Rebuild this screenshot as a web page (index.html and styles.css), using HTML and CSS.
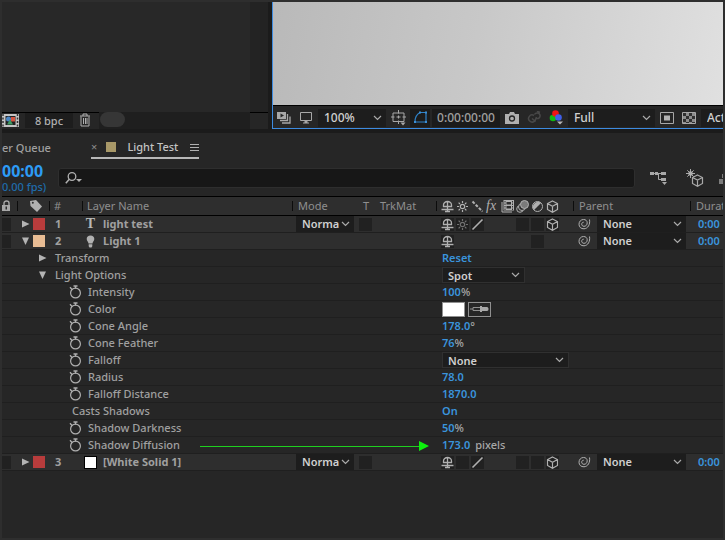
FILE: index.html
```html
<!DOCTYPE html>
<html lang="en">

<head>
  <meta charset="UTF-8">
  <meta name="viewport" content="width=device-width, initial-scale=1.0">
  <title>Light Test</title>
  <link rel="stylesheet" href="styles.css">
</head>

<body>
  <!-- shared icons -->
  <svg class="sprite" aria-hidden="true">
    <symbol id="shy" viewBox="0 0 13 13">
      <path d="M2.500 6.500V5a4 3.500 0 0 1 8 0v1.500zM6.500 1v10M.500 9.500h12M4 11.500h5" fill="none" stroke="currentColor" stroke-width="1.300" />
    </symbol>
    <symbol id="sun" viewBox="0 0 13 13">
      <circle cx="6.500" cy="6.500" r="2.200" fill="none" stroke="currentColor" stroke-width="1.200" />
      <path d="M6.500 1v2M6.500 10v2M1 6.500h2M10 6.500h2M2.600 2.600l1.400 1.400M9 9l1.400 1.400M10.400 2.600L9 4M4 9l-1.400 1.400" stroke="currentColor" stroke-width="1.200" />
    </symbol>
    <symbol id="slash" viewBox="0 0 13 13">
      <path d="M1.500 11.500l10-10" stroke="currentColor" stroke-width="1.600" />
    </symbol>
    <symbol id="cube" viewBox="0 0 13 13">
      <path d="M6.500 1l5 2.500v6l-5 2.700-5-2.700v-6zM1.500 3.500l5 2.700 5-2.700M6.500 6.200v6" fill="none" stroke="currentColor" stroke-width="1.200" />
    </symbol>
    <symbol id="watch" viewBox="0 0 13 14">
      <circle cx="6.500" cy="8" r="4.900" fill="none" stroke="currentColor" stroke-width="1.200" />
      <path d="M4.500 1h4M6.500 1v2.500M1 2.200l2 2.300" fill="none" stroke="currentColor" stroke-width="1.300" />
    </symbol>
    <symbol id="right" viewBox="0 0 9 8">
      <path d="M1 .5v7L8.500 4z" fill="currentColor" />
    </symbol>
    <symbol id="down" viewBox="0 0 9 8">
      <path d="M1 .5h7L4.500 8z" fill="currentColor" />
    </symbol>
    <symbol id="whip" viewBox="0 0 13 13">
      <path d="M11.500 1.500c.8 5-1.500 9-5.500 9.300-3 .1-5-1.800-5-4.500C1 3.500 3 1.500 5.500 1.500c2.300 0 3.700 1.400 3.700 3.300C9.200 7 7.800 8.300 6 8.300c-1.400 0-2.300-.9-2.300-2.100 0-1.200.8-2 2-2" fill="none" stroke="currentColor" />
    </symbol>
  </svg>

  <div class="app">
    <div class="top">
      <!-- project panel -->
      <div class="project">
        <div class="project-body"></div>
        <div class="project-scroll"></div>
        <div class="project-footer">
          <svg class="film" viewBox="0 0 18 13">
            <path d="M0 0h17v13H0z" fill="#c4c4c4" />
            <path d="M1 0v13M15.500 0v13" stroke="#333" stroke-width="1.500" stroke-dasharray="2 1.500" />
            <path d="M3.500 2h10v9h-10z" fill="#222" />
            <circle cx="6.500" cy="5" r="2.500" fill="#4a86c4" />
            <path d="M9 3h4v4.500H9z" fill="#d4543f" />
            <path d="M5 10.500l3-5 3 5z" fill="#3f9a62" />
          </svg>
          <button class="depth">8 bpc</button>
          <svg class="trash" viewBox="0 0 12 14">
            <path d="M1 3h10M4 3V1h4v2M2 3.500V13h8V3.500M4.500 5v6M6.500 5v6M8 5v6" fill="none" stroke="currentColor" />
          </svg>
        </div>
        <div class="project-track"><span class="knob"></span></div>
        <div class="project-corner"></div>
      </div>

      <!-- composition viewer -->
      <div class="viewer">
        <div class="canvas"></div>
        <div class="toolbar">
          <button class="tool" aria-label="Always preview">
            <svg width="14" height="12" viewBox="0 0 14 12">
              <path d="M0 0h9v7H0z" fill="#a8a8a8" />
              <path d="M3.500 1.500v4L7 3.500z" fill="#262626" />
              <path d="M10.500 2v6.500H3M13 4.500v6.500H5" fill="none" stroke="#a8a8a8" stroke-width="1.300" />
            </svg>
          </button>
          <button class="tool" aria-label="Primary viewer">
            <svg width="14" height="12" viewBox="0 0 14 12">
              <path d="M1.500.5h11v8h-11zM4 11h6" fill="none" stroke="#a8a8a8" />
              <path d="M5.500 9h3v2h-3z" fill="#a8a8a8" />
            </svg>
          </button>
          <select class="select zoom" aria-label="Magnification"><option>100%</option></select>
          <button class="tool" aria-label="Grid and guides">
            <svg width="15" height="16" viewBox="0 0 15 16">
              <path d="M2 3h11v8.500H2zM7.500 0v3.500M7.500 5.500v3M7.500 10.500V14M0 7h3.500M5.500 7h4M11.500 7H15" fill="none" stroke="#a8a8a8" />
              <path d="M9.500 12.500h5L12 15.500z" fill="#a8a8a8" />
            </svg>
          </button>
          <button class="tool tool-on" aria-label="Toggle mask visibility">
            <svg width="15" height="13" viewBox="0 0 15 13">
              <path d="M2 11C2 6 4 3 7 1.500h6V11z" fill="none" stroke="#2f82c8" stroke-width="1.200" />
              <path d="M1 10h2v2H1zM6 .5h2v2H6zM12 .5h2v2h-2zM12 10h2v2h-2z" fill="#3b8fd6" />
            </svg>
          </button>
          <button class="timecode">0:00:00:00</button>
          <button class="tool" aria-label="Take snapshot">
            <svg width="14" height="12" viewBox="0 0 14 12">
              <path d="M0 2h4l1-2h4l1 2h4v10H0z" fill="#b0b0b0" />
              <circle cx="7" cy="6.500" r="2.500" fill="#b0b0b0" stroke="#262626" stroke-width="1.300" />
            </svg>
          </button>
          <button class="tool" aria-label="Show snapshot">
            <svg width="15" height="13" viewBox="0 0 15 13">
              <path d="M7 4.500a3.500 3.500 0 1 0 1 5M5 7.500l3 2.500 1.500-4M7.500 3.500c1-2 5-2 5.500.5.500 2.500-1.500 4-3.500 3.500M10 0l3 1.500" fill="none" stroke="#484848" stroke-width="1.500" />
            </svg>
          </button>
          <button class="tool" aria-label="Channels">
            <svg width="15" height="15" viewBox="0 0 15 15">
              <circle cx="4" cy="8" r="3.300" fill="#12b812" />
              <circle cx="6.500" cy="3.500" r="3.300" fill="#f01414" />
              <circle cx="9.500" cy="7.500" r="3.300" fill="#3f5fe8" />
              <path d="M8 11.500h6l-3 3z" fill="#b8b8b8" />
            </svg>
          </button>
          <select class="select resolution" aria-label="Resolution"><option>Full</option></select>
          <button class="tool" aria-label="Region of interest">
            <svg width="14" height="12" viewBox="0 0 14 12">
              <path d="M.5.5h13v11H.5z" fill="none" stroke="#a8a8a8" />
              <path d="M4 3.500h6v5H4z" fill="#b4b4b4" />
            </svg>
          </button>
          <button class="tool" aria-label="Transparency grid">
            <svg width="14" height="12" viewBox="0 0 14 12">
              <path d="M.5.5h13v11H.5z" fill="#303030" stroke="#a8a8a8" />
              <path d="M4 1h3v3H4zM10 1h3v3h-3zM1 4h3v3H1zM7 4h3v3H7zM4 7h3v3H4zM10 7h3v3h-3zM1 10h3v1H1zM7 10h3v1H7z" fill="#8c8c8c" />
            </svg>
          </button>
          <select class="select camera" aria-label="3D view"><option>Active Camera</option></select>
        </div>
      </div>
    </div>

    <!-- timeline -->
    <div class="timeline">
      <div class="tabs">
        <button class="tab">er Queue</button>
        <div class="tab tab-active">
          <button class="tab-close" aria-label="Close">×</button>
          <span class="tab-color"></span>
          <button class="tab-name">Light Test</button>
          <button class="tab-menu" aria-label="Panel menu"></button>
        </div>
      </div>

      <div class="controls">
        <div class="time">
          <span class="now">00:00</span>
          <span class="fps">0.00 fps)</span>
        </div>
        <label class="search">
          <svg width="18" height="12" viewBox="0 0 18 12">
            <circle cx="7" cy="4.500" r="3.800" fill="none" stroke="#b0b0b0" stroke-width="1.300" />
            <path d="M4.300 7.300L.8 11.300" stroke="#b0b0b0" stroke-width="1.500" />
            <path d="M11 7h6l-3 3z" fill="#b0b0b0" />
          </svg>
          <input type="text" aria-label="Search layers">
        </label>
        <button class="ctl" aria-label="Mini flowchart">
          <svg width="18" height="14" viewBox="0 0 18 14">
            <path d="M0 1h4v3H0zM5 1h3v3H5zM11 1h5v3h-5zM11 7h5v3h-5z" fill="#a8a8a8" />
            <path d="M0 2.500h12M8.500 2.500v6H12" fill="none" stroke="#a8a8a8" />
            <path d="M12 11h5l-2.500 3z" fill="#a8a8a8" />
          </svg>
        </button>
        <button class="ctl" aria-label="Draft 3D">
          <svg width="18" height="18" viewBox="0 0 18 18">
            <path d="M11.500 6l5 2.500v6l-5 2.700-5-2.700v-6zM6.500 8.500l5 2.500 5-2.500M11.500 11v6" fill="none" stroke="#a8a8a8" stroke-width="1.200" />
            <path d="M4.500 0v9M0 4.500h9M1.300 1.300l6.400 6.400M7.700 1.300L1.300 7.700" stroke="#a8a8a8" />
            <circle cx="4.500" cy="4.500" r="2.300" fill="#b0b0b0" />
          </svg>
        </button>
        <button class="ctl ctl-last" aria-label="Hide shy layers">
          <svg width="10" height="13" viewBox="0 0 10 13">
            <path d="M0 7h9v5H0zM3 2h4v4H3z" fill="#7c7c7c" />
          </svg>
        </button>
      </div>

      <table class="layers">
        <colgroup>
          <col class="col-lock">
          <col class="col-label">
          <col class="col-num">
          <col class="col-name">
          <col class="col-mode">
          <col class="col-switches">
          <col class="col-parent">
          <col class="col-duration">
        </colgroup>
        <thead>
          <tr>
            <th>
              <svg width="9" height="12" viewBox="0 0 9 12">
                <path d="M2 5V3a2.500 2 0 0 1 5 0v2" fill="none" stroke="#a8a8a8" stroke-width="1.400" />
                <path d="M0 5h8v6H0z" fill="#a8a8a8" />
                <path d="M3.500 6.500h1.500v3H3.500z" fill="#2e2e2e" />
              </svg>
            </th>
            <th class="tag">
              <svg width="12" height="12" viewBox="0 0 12 12">
                <path d="M0 1l6-1 6 6.500L7 12 .5 6z" fill="#b0b0b0" />
                <circle cx="2.800" cy="2.800" r="1" fill="#2e2e2e" />
              </svg>
            </th>
            <th>#</th>
            <th>Layer Name</th>
            <th>
              <div class="modes"><span class="mode-head">Mode</span><span class="t-head">T</span><span>TrkMat</span></div>
            </th>
            <th>
              <div class="switches">
                <svg class="icon"><use href="#shy" /></svg>
                <svg class="icon"><use href="#sun" /></svg>
                <svg class="icon" viewBox="0 0 13 13"><path d="M1.500 1.500l10 10" stroke="currentColor" stroke-width="2" stroke-dasharray="3 1.500" /></svg>
                <i class="fx">fx</i>
                <svg class="icon" viewBox="0 0 13 13">
                  <path d="M1 2v10h10" fill="none" stroke="currentColor" />
                  <path d="M2.500 0H13v10.500H2.500z" fill="currentColor" />
                  <path d="M4 1v9M11.500 1v9" stroke="#2e2e2e" stroke-dasharray="1.500 1" />
                  <path d="M5.500 2h4.500v2.500H5.500zM5.500 6h4.500v2.500H5.500z" fill="#2e2e2e" />
                </svg>
                <svg class="icon" viewBox="0 0 13 13">
                  <circle cx="4" cy="9" r="3.300" fill="none" stroke="currentColor" />
                  <circle cx="6" cy="7" r="3.500" fill="#2e2e2e" stroke="currentColor" />
                  <circle cx="8.500" cy="4.500" r="4" fill="#7a7a7a" stroke="currentColor" />
                </svg>
                <svg class="icon" viewBox="0 0 13 13">
                  <circle cx="6.500" cy="6.500" r="5" fill="none" stroke="currentColor" />
                  <path d="M10 3a5 5 0 0 0-7 7z" fill="currentColor" />
                </svg>
                <svg class="icon"><use href="#cube" /></svg>
              </div>
            </th>
            <th class="wide">Parent</th>
            <th class="wide">Duration</th>
          </tr>
        </thead>
        <tbody>
          <tr class="layer">
            <td><span class="box"></span></td>
            <td><div class="label"><svg class="twirl"><use href="#right" /></svg><span class="swatch red"></span></div></td>
            <td class="num">1</td>
            <td>
              <div class="name"><b class="type">T</b>light test</div>
            </td>
            <td>
              <div class="modes"><select class="select mode" aria-label="Mode"><option>Norma</option></select><span class="box"></span></div>
            </td>
            <td>
              <div class="switches">
                <span class="box"><svg class="icon"><use href="#shy" /></svg></span>
                <span class="box"><svg class="icon dim"><use href="#sun" /></svg></span>
                <span class="box"><svg class="icon"><use href="#slash" /></svg></span>
                <span class="blank"></span>
                <span class="blank"></span>
                <span class="box"></span>
                <span class="box"></span>
                <span class="box"><svg class="icon"><use href="#cube" /></svg></span>
              </div>
            </td>
            <td>
              <div class="parent"><svg class="icon"><use href="#whip" /></svg><select class="select parent-select" aria-label="Parent"><option>None</option></select></div>
            </td>
            <td class="value duration">0:00</td>
          </tr>
          <tr class="layer">
            <td><span class="box"></span></td>
            <td><div class="label"><svg class="twirl"><use href="#down" /></svg><span class="swatch peach"></span></div></td>
            <td class="num">2</td>
            <td>
              <div class="name">
                <svg class="icon" viewBox="0 0 13 13">
                  <path d="M6.500.5c2.300 0 3.800 1.500 3.800 3.500 0 1.800-1.600 2.700-1.800 4.500h-4C4.300 6.700 2.700 5.800 2.700 4 2.700 2 4.200.5 6.500.5zM4.700 9.300h3.600v1.900L7.500 12.500h-2l-.8-1.300z" fill="currentColor" />
                </svg>Light 1
              </div>
            </td>
            <td></td>
            <td>
              <div class="switches">
                <span class="box"><svg class="icon"><use href="#shy" /></svg></span>
                <span class="blank"></span>
                <span class="blank"></span>
                <span class="blank"></span>
                <span class="blank"></span>
                <span class="blank"></span>
                <span class="box"></span>
              </div>
            </td>
            <td>
              <div class="parent"><svg class="icon"><use href="#whip" /></svg><select class="select parent-select" aria-label="Parent"><option>None</option></select></div>
            </td>
            <td class="value duration">0:00</td>
          </tr>
          <tr>
            <td colspan="5"><div class="group"><svg class="twirl"><use href="#right" /></svg>Transform</div></td>
            <td colspan="3" class="value">Reset</td>
          </tr>
          <tr>
            <td colspan="5"><div class="group"><svg class="twirl"><use href="#down" /></svg>Light Options</div></td>
            <td colspan="3" class="value"><select class="select framed light-type" aria-label="Light type"><option>Spot</option></select></td>
          </tr>
          <tr>
            <td colspan="5"><div class="prop"><svg class="watch"><use href="#watch" /></svg>Intensity</div></td>
            <td colspan="3" class="value">100<span class="unit">%</span></td>
          </tr>
          <tr>
            <td colspan="5"><div class="prop"><svg class="watch"><use href="#watch" /></svg>Color</div></td>
            <td colspan="3" class="value">
              <div class="colors">
                <button class="color" aria-label="Light color"></button>
                <button class="picker" aria-label="Eyedropper">
                  <svg width="20" height="8" viewBox="0 0 20 8">
                    <path d="M1 4h3M4 2.500h8M4 5.500h8M4 2.500v3" fill="none" stroke="#8f8f8f" />
                    <path d="M11 1h2v1h5c2 0 2 4 0 4h-5v1h-2z" fill="#a8a8a8" />
                  </svg>
                </button>
              </div>
            </td>
          </tr>
          <tr>
            <td colspan="5"><div class="prop"><svg class="watch"><use href="#watch" /></svg>Cone Angle</div></td>
            <td colspan="3" class="value">178.0<span class="unit">°</span></td>
          </tr>
          <tr>
            <td colspan="5"><div class="prop"><svg class="watch"><use href="#watch" /></svg>Cone Feather</div></td>
            <td colspan="3" class="value">76<span class="unit">%</span></td>
          </tr>
          <tr>
            <td colspan="5"><div class="prop"><svg class="watch"><use href="#watch" /></svg>Falloff</div></td>
            <td colspan="3" class="value"><select class="select framed falloff" aria-label="Falloff"><option>None</option></select></td>
          </tr>
          <tr>
            <td colspan="5"><div class="prop"><svg class="watch"><use href="#watch" /></svg>Radius</div></td>
            <td colspan="3" class="value">78.0</td>
          </tr>
          <tr>
            <td colspan="5"><div class="prop"><svg class="watch"><use href="#watch" /></svg>Falloff Distance</div></td>
            <td colspan="3" class="value">1870.0</td>
          </tr>
          <tr>
            <td colspan="5"><div class="prop">Casts Shadows</div></td>
            <td colspan="3" class="value">On</td>
          </tr>
          <tr>
            <td colspan="5"><div class="prop"><svg class="watch"><use href="#watch" /></svg>Shadow Darkness</div></td>
            <td colspan="3" class="value">50<span class="unit">%</span></td>
          </tr>
          <tr>
            <td colspan="5"><div class="prop"><svg class="watch"><use href="#watch" /></svg><span class="pointed">Shadow Diffusion</span><span class="arrow"></span></div></td>
            <td colspan="3" class="value">173.0<span class="unit word">pixels</span></td>
          </tr>
          <tr class="layer">
            <td><span class="box"></span></td>
            <td><div class="label"><svg class="twirl"><use href="#right" /></svg><span class="swatch red"></span></div></td>
            <td class="num">3</td>
            <td>
              <div class="name"><span class="solid"></span>[White Solid 1]</div>
            </td>
            <td>
              <div class="modes"><select class="select mode" aria-label="Mode"><option>Norma</option></select><span class="box"></span></div>
            </td>
            <td>
              <div class="switches">
                <span class="box"><svg class="icon"><use href="#shy" /></svg></span>
                <span class="box"></span>
                <span class="box"><svg class="icon"><use href="#slash" /></svg></span>
                <span class="blank"></span>
                <span class="blank"></span>
                <span class="box"></span>
                <span class="box"></span>
                <span class="box"><svg class="icon"><use href="#cube" /></svg></span>
              </div>
            </td>
            <td>
              <div class="parent"><svg class="icon"><use href="#whip" /></svg><select class="select parent-select" aria-label="Parent"><option>None</option></select></div>
            </td>
            <td class="value duration">0:00</td>
          </tr>
        </tbody>
      </table>
    </div>
  </div>
</body>

</html>
```
FILE: styles.css
```css
* {
  box-sizing: border-box;
}

body {
  margin: 0;
  background: #262626;
  color: #a0a0a0;
  font: 500 11px/16px "Noto Sans", "Open Sans", sans-serif;
}

button,
select,
input {
  margin: 0;
  padding: 0;
  border: 0;
  border-radius: 0;
  background: none;
  color: inherit;
  font: inherit;
}

svg {
  display: block;
  flex: none;
}

.sprite {
  display: none;
}

.app {
  display: flex;
  flex-direction: column;
  min-height: 100vh;
  border: 2px solid #2e2e2e;
  overflow: hidden;
}

/* shared drop-down */
.select {
  appearance: none;
  height: 16px;
  padding: 0 14px 0 6px;
  color: #d0d0d0;
  background: #1d1d1d url("data:image/svg+xml,%3Csvg xmlns='http://www.w3.org/2000/svg' width='9' height='6'%3E%3Cpath d='M1 1l3.500 3.500L8 1' fill='none' stroke='%23aaa' stroke-width='1.200'/%3E%3C/svg%3E") no-repeat right 4px center;
}

.top {
  display: flex;
  gap: 4px;
  padding-bottom: 4px;
  background: #1b1b1b;
}

/* project panel */
.project {
  width: 266px;
  display: grid;
  grid-template-columns: 97px 1fr 18px;
  grid-template-rows: 1fr 17px;
}

.project-body {
  grid-column: 1 / 3;
  background: #282828;
}

.project-scroll {
  background: #232323;
}

.project-footer,
.project-corner {
  border-top: 1px solid #000;
  background: #262626;
}

.project-footer {
  display: flex;
  align-items: center;
  padding-bottom: 2px;
}

.film {
  width: 18px;
  height: 13px;
}

.depth {
  width: 48px;
  height: 15px;
  margin: 0 6px 0 5px;
  background: #1d1d1d;
  color: #b0b0b0;
}

.trash {
  width: 12px;
  height: 14px;
  color: #b0b0b0;
}

.project-track {
  background: #1f1f1f;
  padding: 0 1px;
}

.knob {
  display: block;
  width: 25px;
  height: 15px;
  border-radius: 8px;
  background: #363636;
}

/* viewer */
.viewer {
  flex: 1;
  min-width: 0;
  border: solid #3d8be0;
  border-width: 0 0 1px 1px;
}

.canvas {
  height: 103px;
  background: linear-gradient(100deg, #b9b9b9, #c8c8c8 45%, #e0e0e0);
}

.toolbar {
  display: flex;
  align-items: center;
  gap: 2px;
  height: 23px;
  padding: 1px 0 0 1px;
  border-top: 1px solid #000;
  background: #262626;
  overflow: hidden;
  font-size: 12px;
}

.toolbar .select {
  flex: none;
  height: 18px;
}

.tool {
  flex: none;
  display: flex;
  justify-content: center;
  align-items: center;
  width: 20px;
  height: 18px;
}

.tool-on,
.timecode {
  background: #1b1b1b;
}

.timecode {
  flex: none;
  width: 68px;
  height: 18px;
}

.zoom {
  width: 68px;
}

.resolution {
  width: 87px;
}

.camera {
  width: 110px;
}

/* timeline */
.timeline {
  flex: 1;
}

.tabs {
  display: flex;
  height: 27px;
}

.tab {
  height: 26px;
  padding-top: 4px;
}

.tab-active {
  display: flex;
  align-items: center;
  gap: 10px;
  margin-left: 40px;
  border-bottom: 2px solid #b8b8b8;
  color: #c4c4c4;
}

.tab-close {
  width: 5px;
  color: #888;
}

.tab-color {
  width: 10px;
  height: 10px;
  background: #a89868;
}

.tab-name {
  width: 54px;
}

.tab-menu {
  width: 9px;
  height: 7px;
  border: solid #b0b0b0;
  border-width: 1px 0;
  background: linear-gradient(#b0b0b0, #b0b0b0) no-repeat center / 100% 1px;
}

.controls {
  display: flex;
  align-items: center;
  gap: 12px;
  height: 36px;
}

.time {
  width: 44px;
  display: flex;
  flex-direction: column;
  align-items: flex-start;
  padding-top: 2px;
  white-space: nowrap;
}

.now {
  color: #2d9bf5;
  font-size: 16px;
  font-weight: 700;
}

.fps {
  color: #1f6cab;
}

.search {
  flex: 1;
  display: flex;
  align-items: center;
  gap: 4px;
  height: 20px;
  padding: 0 6px;
  border: 1px solid #2e2e2e;
  border-radius: 3px;
  background: #171717;
}

.search input {
  flex: 1;
  min-width: 0;
  outline: none;
}

.ctl {
  width: 24px;
  display: flex;
  justify-content: center;
}

.ctl-last {
  width: 4px;
  justify-content: flex-start;
  overflow: hidden;
}

/* layer table */
.layers {
  width: 100%;
  table-layout: fixed;
  border-collapse: separate;
  border-spacing: 0;
}

.col-lock {
  width: 15px;
}

.col-label {
  width: 32px;
}

.col-num {
  width: 33px;
}

.col-mode {
  width: 144px;
}

.col-switches {
  width: 137px;
}

.col-parent {
  width: 117px;
}

.col-duration {
  width: 33px;
}

.layers th {
  position: relative;
  height: 20px;
  padding: 0 0 0 5px;
  border: solid #000;
  border-width: 1px 0;
  background: #2e2e2e;
  color: #8f8f8f;
  font-weight: 400;
  text-align: left;
  white-space: nowrap;
  overflow: hidden;
}

/* short divider between the header cells */
.layers th + th::before {
  content: "";
  position: absolute;
  left: 0;
  top: 4px;
  width: 1px;
  height: 10px;
  background: #0c0c0c;
}

.layers th:first-child {
  padding-left: 0;
}

.layers th.tag {
  padding-left: 13px;
}

.layers th.wide {
  padding-left: 6px;
}

.layers td {
  height: 17px;
  padding: 0;
  border-bottom: 1px solid #1f1f1f;
  white-space: nowrap;
  overflow: hidden;
}

.layer {
  background: #2e2e2e;
  font-weight: 700;
}

.layer select {
  font-weight: 600;
}

.layers .select {
  display: block;
}

.layers .value {
  padding-left: 6px;
  color: #3a94dc;
  font-weight: 600;
}

.layers .duration {
  padding-left: 8px;
}

.unit {
  color: #a8a8a8;
  font-weight: 500;
}

.word {
  margin-left: 5px;
}

.label,
.name,
.modes,
.switches,
.parent,
.group,
.prop,
.colors {
  display: flex;
  align-items: center;
  height: 16px;
}

.box,
.blank {
  display: block;
  width: 13px;
  height: 13px;
}

.box {
  background: #212121;
}

td:first-child > .box {
  width: 9px;
}

.label {
  gap: 3px;
  padding-left: 4px;
}

.twirl {
  width: 9px;
  height: 8px;
  color: #b4b4b4;
}

.swatch {
  width: 12px;
  height: 12px;
}

.red {
  background: #b83c3c;
}

.peach {
  background: #e8bc94;
}

.layers .num {
  padding-left: 6px;
}

.name {
  gap: 6px;
  padding-left: 2px;
}

.icon {
  width: 13px;
  height: 13px;
  color: #b0b0b0;
}

.dim {
  color: #707070;
}

.type {
  width: 13px;
  color: #b8b8b8;
  font-family: "Liberation Serif", serif;
  font-size: 14px;
  text-align: center;
}

.solid {
  width: 13px;
  height: 13px;
  border: 1px solid #000;
  background: #fff;
}

.modes {
  gap: 5px;
  padding-left: 4px;
}

th .modes {
  gap: 0;
  padding-left: 1px;
}

.mode-head {
  width: 65px;
}

.t-head {
  width: 17px;
}

.mode {
  width: 58px;
}

.switches {
  gap: 2px;
  padding-left: 5px;
}

th .switches {
  padding-left: 0;
}

.fx {
  width: 13px;
  color: #b0b0b0;
  font: italic 14px/14px "Liberation Serif", serif;
}

.parent {
  gap: 6px;
  padding-left: 5px;
}

.parent-select {
  width: 89px;
}

.group {
  gap: 8px;
  padding-left: 36px;
}

.prop {
  gap: 6px;
  padding: 0 7px 0 67px;
}

.prop:not(:has(.watch)) {
  padding-left: 70px;
}

.watch {
  width: 13px;
  height: 14px;
  color: #b0b0b0;
}

.layers .framed {
  padding-left: 5px;
  border: 1px solid #303030;
}

.light-type {
  width: 83px;
}

.falloff {
  width: 127px;
}

.colors {
  gap: 3px;
}

.color,
.picker {
  width: 23px;
  height: 15px;
  border: 1px solid #909090;
}

.color {
  background: #fff;
}

/* green pointer to the diffusion value */
.pointed {
  margin-right: 14px;
}

.arrow {
  flex: 1;
  display: flex;
  align-items: center;
  padding-top: 2px;
}

.arrow::before {
  content: "";
  flex: 1;
  height: 1px;
  background: #1fd01f;
}

.arrow::after {
  content: "";
  border: solid transparent;
  border-width: 5px 0 5px 10px;
  border-left-color: #0cf00c;
}
```
